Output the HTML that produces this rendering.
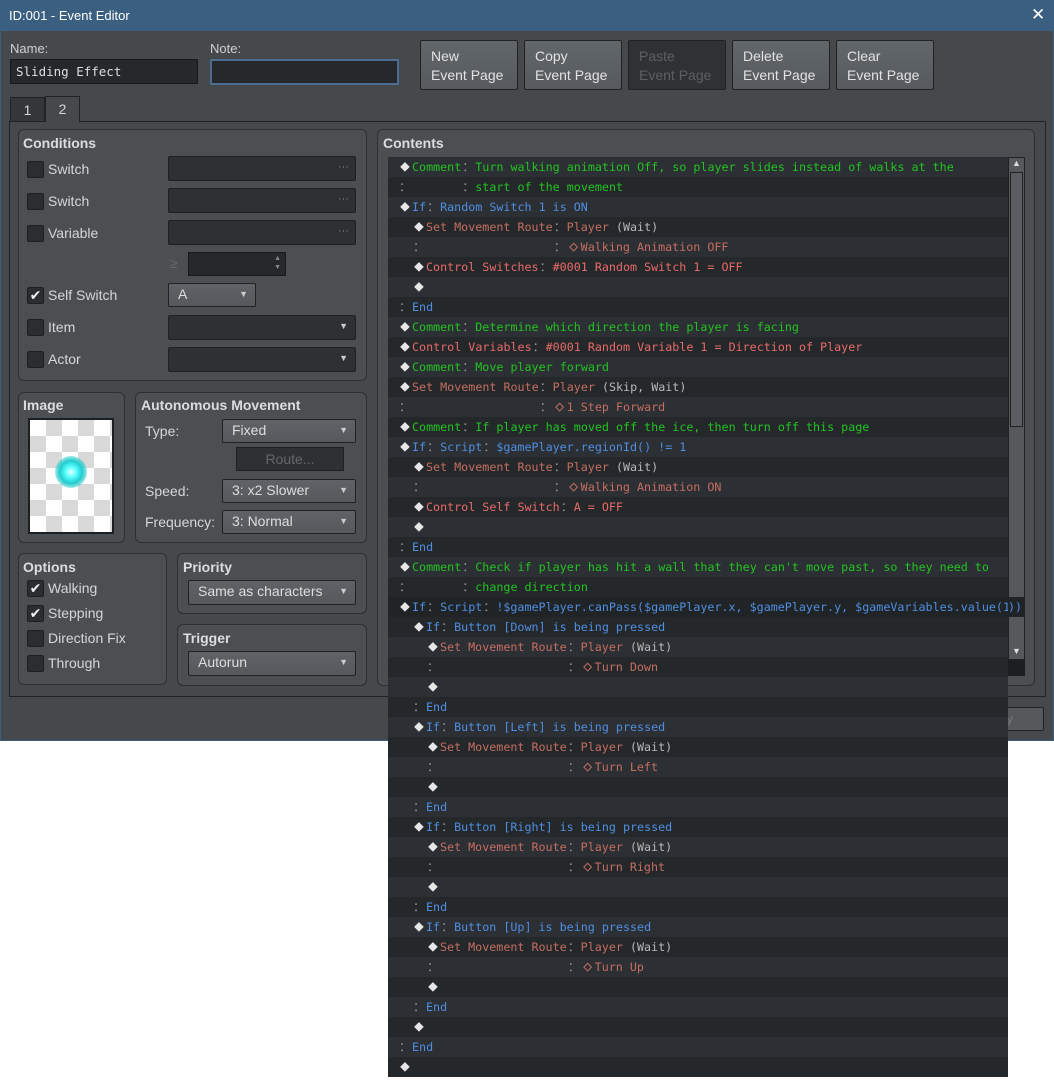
<!DOCTYPE html>
<html><head><meta charset="utf-8"><style>
*{box-sizing:border-box;margin:0;padding:0}
body{width:1054px;height:1080px;background:#fff;position:relative;overflow:hidden;font-family:"Liberation Sans","DejaVu Sans",sans-serif;font-size:13px;color:#d6d6d6}
.a{position:absolute}
#win{left:0;top:0;width:1054px;height:741px;background:#46494c;border:1px solid #3b5f80}
#title{left:0;top:0;width:1054px;height:31px;background:#3b5f80;color:#fff;font-size:13px;line-height:31px;padding-left:9px}
.lbl{color:#cfcfcf;font-size:13px}
.inp{background:#26292c;border:1px solid #17191b}
.btn{background:linear-gradient(#62676b,#565a5e);border:1px solid #222;border-radius:2px;color:#e2e2e2;font-size:14px;line-height:19px;padding:6px 0 0 10px}
.btn.dis{background:#2f3235;color:#5d6063}
.grp{background:#4c4f52;border:1px solid #2d2f31;border-radius:6px}
.gt{font-weight:bold;font-size:14px;color:#dcdcdc}
.cb{width:17px;height:17px;background:#2b2e31;border:1px solid #1d1f21;border-radius:2px;color:#eee;font-size:14px;line-height:15px;text-align:center}
.fld{background:#2e3134;border:1px solid #1d1f21;border-radius:2px;color:#888;text-align:right;padding-right:6px;line-height:20px;font-size:11px}
.dd{background:linear-gradient(#5f6367,#55595c);border:1px solid #222;border-radius:2px;color:#ddd;font-size:14px;line-height:21px;padding-left:9px}
.dd:after{content:"▼";position:absolute;right:7px;top:0;font-size:9px;color:#ccc}
.dd.dk{background:#2e3134}
#list{left:388px;top:157px;width:620px;height:920px;background:#25282b;font-family:"DejaVu Sans Mono","Liberation Mono",monospace;font-size:11.7px;overflow:visible}
.r{height:20px;line-height:20px;white-space:pre;padding-left:10px;color:#ccc}
.r:nth-child(odd){background:#2c2f33}
.r.l1{padding-left:24px}.r.l2{padding-left:38px}
.d{display:inline-block;width:14px;text-align:center;color:#e6e6e6;font-size:16px;line-height:18px;vertical-align:top}
.k{display:inline-block;width:14px;text-align:center;color:#9a9a9a}
.g{color:#22c322}.b{color:#4f8ee0}.m{color:#c46e62}.s{color:#e86a6a}.w{color:#b8b8b8}
.o{display:inline-block;width:14px;text-align:center;font-size:15px;line-height:18px;vertical-align:top}
</style></head><body>
<div id="win" class="a"></div>
<div id="title" class="a">ID:001 - Event Editor</div>
<div class="a" style="left:1031px;top:5px;color:#fff;font-size:17px">✕</div>

<div class="a lbl" style="left:10px;top:41px">Name:</div>
<div class="a inp" style="left:10px;top:59px;width:188px;height:25px;font-family:'DejaVu Sans Mono',monospace;font-size:12.5px;padding:4px 5px;color:#ddd">Sliding Effect</div>
<div class="a lbl" style="left:210px;top:41px">Note:</div>
<div class="a inp" style="left:210px;top:59px;width:189px;height:26px;border:2px solid #4c6d92"></div>

<div class="a btn" style="left:420px;top:40px;width:98px;height:50px">New<br>Event Page</div>
<div class="a btn" style="left:524px;top:40px;width:98px;height:50px">Copy<br>Event Page</div>
<div class="a btn dis" style="left:628px;top:40px;width:98px;height:50px">Paste<br>Event Page</div>
<div class="a btn" style="left:732px;top:40px;width:98px;height:50px">Delete<br>Event Page</div>
<div class="a btn" style="left:836px;top:40px;width:98px;height:50px">Clear<br>Event Page</div>

<div class="a" style="left:9px;top:121px;width:1037px;height:576px;border:1px solid #222;background:#46494c"></div>
<div class="a" style="left:10px;top:97px;width:35px;height:25px;background:#34373a;border:1px solid #222;text-align:center;line-height:24px;font-size:14px">1</div>
<div class="a" style="left:45px;top:96px;width:35px;height:26px;background:#46494c;border:1px solid #222;border-bottom:none;text-align:center;line-height:24px;font-size:14px">2</div>

<div class="a grp" style="left:18px;top:129px;width:349px;height:252px"></div>
<div class="a gt" style="left:23px;top:135px">Conditions</div>
<div class="a cb" style="left:27px;top:161px"></div><div class="a" style="left:48px;top:161px;font-size:14px">Switch</div>
<div class="a fld" style="left:168px;top:156px;width:188px;height:25px">···</div>
<div class="a cb" style="left:27px;top:193px"></div><div class="a" style="left:48px;top:193px;font-size:14px">Switch</div>
<div class="a fld" style="left:168px;top:188px;width:188px;height:25px">···</div>
<div class="a cb" style="left:27px;top:225px"></div><div class="a" style="left:48px;top:225px;font-size:14px">Variable</div>
<div class="a fld" style="left:168px;top:220px;width:188px;height:25px">···</div>
<div class="a" style="left:170px;top:255px;color:#666;font-size:14px">≥</div>
<div class="a inp" style="left:188px;top:252px;width:98px;height:24px"><span class="a" style="right:4px;top:1px;font-size:7px;color:#888;line-height:9px">▲<br>▼</span></div>
<div class="a cb" style="left:27px;top:287px">✔</div><div class="a" style="left:48px;top:287px;font-size:14px">Self Switch</div>
<div class="a dd" style="left:168px;top:283px;width:88px;height:24px">A</div>
<div class="a cb" style="left:27px;top:319px"></div><div class="a" style="left:48px;top:319px;font-size:14px">Item</div>
<div class="a dd dk" style="left:168px;top:315px;width:188px;height:25px"></div>
<div class="a cb" style="left:27px;top:351px"></div><div class="a" style="left:48px;top:351px;font-size:14px">Actor</div>
<div class="a dd dk" style="left:168px;top:347px;width:188px;height:25px"></div>

<div class="a grp" style="left:18px;top:392px;width:107px;height:151px"></div>
<div class="a gt" style="left:23px;top:397px">Image</div>
<div class="a" style="left:28px;top:418px;width:86px;height:116px;border:2px solid #1d1f21;background-color:#fff;background-image:linear-gradient(45deg,#d9d9d9 25%,transparent 25%,transparent 75%,#d9d9d9 75%),linear-gradient(45deg,#d9d9d9 25%,transparent 25%,transparent 75%,#d9d9d9 75%);background-size:32px 32px;background-position:0 0,16px 16px"></div>
<div class="a" style="left:55px;top:456px;width:32px;height:32px;border-radius:50%;background:radial-gradient(circle,#e8ffff 0,#5ff 25%,#2cc 50%,rgba(40,200,200,.3) 75%,transparent 100%)"></div>

<div class="a grp" style="left:135px;top:392px;width:232px;height:151px"></div>
<div class="a gt" style="left:141px;top:397px">Autonomous Movement</div>
<div class="a" style="left:145px;top:423px;font-size:14px">Type:</div>
<div class="a dd" style="left:222px;top:419px;width:134px;height:24px">Fixed</div>
<div class="a" style="left:236px;top:447px;width:108px;height:24px;background:#2e3134;border:1px solid #1d1f21;color:#666;text-align:center;line-height:22px;font-size:14px">Route...</div>
<div class="a" style="left:145px;top:483px;font-size:14px">Speed:</div>
<div class="a dd" style="left:222px;top:479px;width:134px;height:24px">3: x2 Slower</div>
<div class="a" style="left:145px;top:514px;font-size:14px">Frequency:</div>
<div class="a dd" style="left:222px;top:510px;width:134px;height:24px">3: Normal</div>

<div class="a grp" style="left:18px;top:553px;width:149px;height:132px"></div>
<div class="a gt" style="left:23px;top:559px">Options</div>
<div class="a cb" style="left:27px;top:580px">✔</div><div class="a" style="left:48px;top:580px;font-size:14px">Walking</div>
<div class="a cb" style="left:27px;top:605px">✔</div><div class="a" style="left:48px;top:605px;font-size:14px">Stepping</div>
<div class="a cb" style="left:27px;top:630px"></div><div class="a" style="left:48px;top:630px;font-size:14px">Direction Fix</div>
<div class="a cb" style="left:27px;top:655px"></div><div class="a" style="left:48px;top:655px;font-size:14px">Through</div>

<div class="a grp" style="left:177px;top:553px;width:190px;height:61px"></div>
<div class="a gt" style="left:183px;top:559px">Priority</div>
<div class="a dd" style="left:188px;top:580px;width:168px;height:25px">Same as characters</div>
<div class="a grp" style="left:177px;top:624px;width:190px;height:62px"></div>
<div class="a gt" style="left:183px;top:630px">Trigger</div>
<div class="a dd" style="left:188px;top:651px;width:168px;height:25px">Autorun</div>

<div class="a grp" style="left:377px;top:129px;width:658px;height:557px"></div>
<div class="a gt" style="left:383px;top:135px">Contents</div>
<div class="a" style="left:1008px;top:157px;width:17px;height:503px;background:#55595c;border:1px solid #222"></div>
<div class="a" style="left:1010px;top:172px;width:13px;height:255px;background:#5a5e62;border:1px solid #222"></div>
<div class="a" style="left:1012px;top:158px;font-size:9px;color:#ddd">▲</div>
<div class="a" style="left:1012px;top:646px;font-size:9px;color:#ddd">▼</div>
<div class="a" style="left:1008px;top:660px;width:17px;height:16px;background:#1c1e20"></div>
<div class="a" style="left:930px;top:707px;width:114px;height:24px;background:#55595c;border:1px solid #222;border-radius:2px;color:#777;text-align:right;padding-right:30px;line-height:22px">Apply</div>
<div class="a" style="left:1008px;top:597px;width:17px;height:20px;background:#212427;font-family:'DejaVu Sans Mono',monospace;font-size:11.7px;line-height:20px;color:#4f8ee0">))</div>

<div id="list" class="a">
<div class="r"><span class="d">◆</span><span class="g">Comment</span><span class="k">：</span><span class="g">Turn walking animation Off, so player slides instead of walks at the</span></div>
<div class="r"><span class="k">：</span>       <span class="k">：</span><span class="g">start of the movement</span></div>
<div class="r"><span class="d">◆</span><span class="b">If</span><span class="k">：</span><span class="b">Random Switch 1 is ON</span></div>
<div class="r l1"><span class="d">◆</span><span class="m">Set Movement Route</span><span class="k">：</span><span class="m">Player </span><span class="w">(Wait)</span></div>
<div class="r l1"><span class="k">：</span>                  <span class="k">：</span><span class="m"><span class="o">◇</span>Walking Animation OFF</span></div>
<div class="r l1"><span class="d">◆</span><span class="s">Control Switches</span><span class="k">：</span><span class="s">#0001 Random Switch 1 = OFF</span></div>
<div class="r l1"><span class="d">◆</span></div>
<div class="r"><span class="k">：</span><span class="b">End</span></div>
<div class="r"><span class="d">◆</span><span class="g">Comment</span><span class="k">：</span><span class="g">Determine which direction the player is facing</span></div>
<div class="r"><span class="d">◆</span><span class="s">Control Variables</span><span class="k">：</span><span class="s">#0001 Random Variable 1 = Direction of Player</span></div>
<div class="r"><span class="d">◆</span><span class="g">Comment</span><span class="k">：</span><span class="g">Move player forward</span></div>
<div class="r"><span class="d">◆</span><span class="m">Set Movement Route</span><span class="k">：</span><span class="m">Player </span><span class="w">(Skip, Wait)</span></div>
<div class="r"><span class="k">：</span>                  <span class="k">：</span><span class="m"><span class="o">◇</span>1 Step Forward</span></div>
<div class="r"><span class="d">◆</span><span class="g">Comment</span><span class="k">：</span><span class="g">If player has moved off the ice, then turn off this page</span></div>
<div class="r"><span class="d">◆</span><span class="b">If</span><span class="k">：</span><span class="b">Script</span><span class="k">：</span><span class="b">$gamePlayer.regionId() != 1</span></div>
<div class="r l1"><span class="d">◆</span><span class="m">Set Movement Route</span><span class="k">：</span><span class="m">Player </span><span class="w">(Wait)</span></div>
<div class="r l1"><span class="k">：</span>                  <span class="k">：</span><span class="m"><span class="o">◇</span>Walking Animation ON</span></div>
<div class="r l1"><span class="d">◆</span><span class="s">Control Self Switch</span><span class="k">：</span><span class="s">A = OFF</span></div>
<div class="r l1"><span class="d">◆</span></div>
<div class="r"><span class="k">：</span><span class="b">End</span></div>
<div class="r"><span class="d">◆</span><span class="g">Comment</span><span class="k">：</span><span class="g">Check if player has hit a wall that they can't move past, so they need to</span></div>
<div class="r"><span class="k">：</span>       <span class="k">：</span><span class="g">change direction</span></div>
<div class="r" style="background:#212427;overflow:hidden"><span class="d">◆</span><span class="b">If</span><span class="k">：</span><span class="b">Script</span><span class="k">：</span><span class="b">!$gamePlayer.canPass($gamePlayer.x, $gamePlayer.y, $gameVariables.value(1</span></div>
<div class="r l1"><span class="d">◆</span><span class="b">If</span><span class="k">：</span><span class="b">Button [Down] is being pressed</span></div>
<div class="r l2"><span class="d">◆</span><span class="m">Set Movement Route</span><span class="k">：</span><span class="m">Player </span><span class="w">(Wait)</span></div>
<div class="r l2"><span class="k">：</span>                  <span class="k">：</span><span class="m"><span class="o">◇</span>Turn Down</span></div>
<div class="r l2"><span class="d">◆</span></div>
<div class="r l1"><span class="k">：</span><span class="b">End</span></div>
<div class="r l1"><span class="d">◆</span><span class="b">If</span><span class="k">：</span><span class="b">Button [Left] is being pressed</span></div>
<div class="r l2"><span class="d">◆</span><span class="m">Set Movement Route</span><span class="k">：</span><span class="m">Player </span><span class="w">(Wait)</span></div>
<div class="r l2"><span class="k">：</span>                  <span class="k">：</span><span class="m"><span class="o">◇</span>Turn Left</span></div>
<div class="r l2"><span class="d">◆</span></div>
<div class="r l1"><span class="k">：</span><span class="b">End</span></div>
<div class="r l1"><span class="d">◆</span><span class="b">If</span><span class="k">：</span><span class="b">Button [Right] is being pressed</span></div>
<div class="r l2"><span class="d">◆</span><span class="m">Set Movement Route</span><span class="k">：</span><span class="m">Player </span><span class="w">(Wait)</span></div>
<div class="r l2"><span class="k">：</span>                  <span class="k">：</span><span class="m"><span class="o">◇</span>Turn Right</span></div>
<div class="r l2"><span class="d">◆</span></div>
<div class="r l1"><span class="k">：</span><span class="b">End</span></div>
<div class="r l1"><span class="d">◆</span><span class="b">If</span><span class="k">：</span><span class="b">Button [Up] is being pressed</span></div>
<div class="r l2"><span class="d">◆</span><span class="m">Set Movement Route</span><span class="k">：</span><span class="m">Player </span><span class="w">(Wait)</span></div>
<div class="r l2"><span class="k">：</span>                  <span class="k">：</span><span class="m"><span class="o">◇</span>Turn Up</span></div>
<div class="r l2"><span class="d">◆</span></div>
<div class="r l1"><span class="k">：</span><span class="b">End</span></div>
<div class="r l1"><span class="d">◆</span></div>
<div class="r"><span class="k">：</span><span class="b">End</span></div>
<div class="r"><span class="d">◆</span></div>
</div>
</body></html>
